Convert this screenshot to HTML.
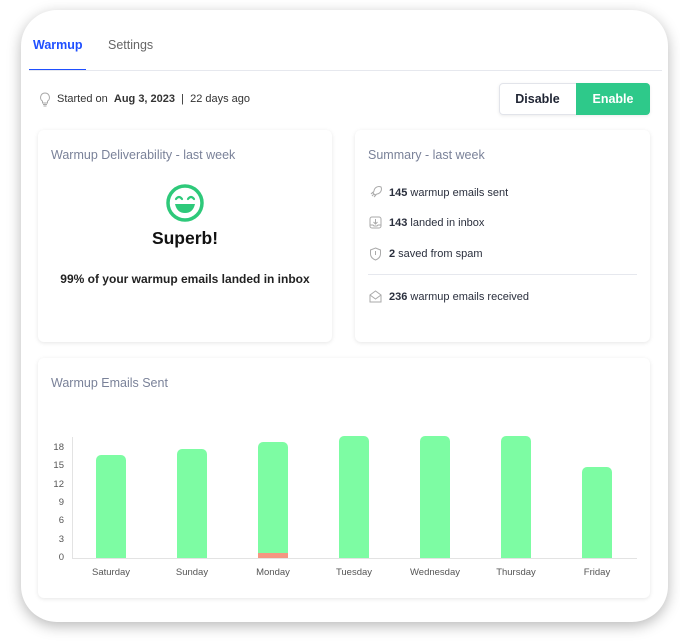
<!DOCTYPE html>
<html><head><meta charset="utf-8"><style>
*{margin:0;padding:0;box-sizing:border-box}
body{width:680px;height:643px;background:#fff;font-family:"Liberation Sans",sans-serif;position:relative;overflow:hidden;color:#1f2433}
.frame{position:absolute;left:21px;top:10px;width:647px;height:612px;border-radius:36px;background:#fff;box-shadow:0 4px 14px rgba(0,0,0,.28)}
.abs{position:absolute}
.card{position:absolute;background:#fff;border-radius:6px;box-shadow:0 1px 4px rgba(0,0,0,.10)}
.ttl{position:absolute;font-size:12.5px;color:#7a8299}
.row{position:absolute;left:14px;font-size:11px;color:#2a2f3d;display:flex;align-items:center}
.row svg{margin-right:7px}
.bar{position:absolute;width:30px;background:#7dfca3;border-radius:5px 5px 0 0}
.yl{position:absolute;left:44px;width:20px;text-align:right;font-size:9.5px;color:#555}
.xl{position:absolute;top:567px;font-size:9.5px;color:#555;width:80px;text-align:center}
</style></head><body>
<div class="frame"></div>
<div class="abs" style="left:33px;top:38px;font-size:12.5px;font-weight:bold;color:#1f4fff">Warmup</div>
<div class="abs" style="left:108px;top:38px;font-size:12.5px;color:#666">Settings</div>
<div class="abs" style="left:29px;top:69px;width:57px;height:2px;background:#1f4fff"></div>
<div class="abs" style="left:29px;top:70px;width:633px;height:1px;background:#e6e8ee"></div>
<svg class="abs" style="left:39px;top:92px" width="12" height="15" viewBox="0 0 12 15"><path d="M6 1a4.5 4.5 0 0 0-2.5 8.2V11h5V9.2A4.5 4.5 0 0 0 6 1zM4 12.5h4M4.5 14h3" fill="none" stroke="#aaa" stroke-width="1"/></svg>
<div class="abs" style="left:57px;top:93px;font-size:11px;color:#333">Started on &nbsp;<b>Aug 3, 2023</b> &nbsp;| &nbsp;22 days ago</div>
<div class="abs" style="left:499px;top:83px;width:151px;height:32px;border:1px solid #e2e4ea;border-radius:4px;box-shadow:0 1px 3px rgba(0,0,0,.08)"></div>
<div class="abs" style="left:499px;top:83px;width:77px;height:32px;line-height:32px;text-align:center;font-size:12.5px;font-weight:bold;color:#1f2433">Disable</div>
<div class="abs" style="left:576px;top:83px;width:74px;height:32px;line-height:32px;text-align:center;font-size:12.5px;font-weight:bold;color:#fff;background:#2ec98a;border-radius:0 4px 4px 0">Enable</div>

<div class="card" style="left:38px;top:130px;width:294px;height:212px">
<div class="ttl" style="left:13px;top:18px">Warmup Deliverability - last week</div>
<svg class="abs" style="left:127px;top:53px" width="40" height="40" viewBox="0 0 40 40"><circle cx="20" cy="20" r="17" fill="none" stroke="#2ec97a" stroke-width="3.5"/><path d="M11 16q3-4 6 0M23 16q3-4 6 0" fill="none" stroke="#2ec97a" stroke-width="2.2" stroke-linecap="round"/><path d="M10 21h20q-2 9-10 9t-10-9z" fill="#2ec97a"/></svg>
<div class="abs" style="left:0;width:294px;top:98px;text-align:center;font-size:17.5px;font-weight:bold;color:#111">Superb!</div>
<div class="abs" style="left:0;width:294px;top:142px;text-align:center;font-size:12px;font-weight:bold;color:#222">99% of your warmup emails landed in inbox</div>
</div>

<div class="card" style="left:355px;top:130px;width:295px;height:212px">
<div class="ttl" style="left:13px;top:18px">Summary - last week</div>
<div class="row" style="top:56px"><svg width="13" height="13" viewBox="0 0 13 13"><path d="M3 10l2-2M2 8l2-2M5 11l2-2M5 5a5 5 0 0 1 7-4 5 5 0 0 1-4 7l-2 1-2-2z" fill="none" stroke="#aaa" stroke-width="1"/></svg><b>145</b>&nbsp;warmup emails sent</div>
<div class="row" style="top:86px"><svg width="13" height="13" viewBox="0 0 13 13"><rect x="1" y="1" width="11" height="11" rx="2" fill="none" stroke="#aaa"/><path d="M6.5 3v5M4.5 6l2 2 2-2M1 9h3l1 1h3l1-1h3" fill="none" stroke="#aaa"/></svg><b>143</b>&nbsp;landed in inbox</div>
<div class="row" style="top:117px"><svg width="13" height="14" viewBox="0 0 13 14"><path d="M6.5 1l5 2v4c0 3-2.5 5-5 6-2.5-1-5-3-5-6V3z" fill="none" stroke="#aaa"/><path d="M6.5 4v4" stroke="#aaa"/></svg><b>2</b>&nbsp;saved from spam</div>
<div class="abs" style="left:13px;top:144px;width:269px;height:1px;background:#e6e8ee"></div>
<div class="row" style="top:160px"><svg width="13" height="13" viewBox="0 0 13 13"><path d="M1 5l5.5-4 5.5 4v7H1zM1 5l5.5 4 5.5-4" fill="none" stroke="#aaa"/></svg><b>236</b>&nbsp;warmup emails received</div>
</div>

<div class="card" style="left:38px;top:358px;width:612px;height:240px">
<div class="ttl" style="left:13px;top:18px">Warmup Emails Sent</div>
</div>
<div class="abs" style="left:72px;top:437px;width:1px;height:121px;background:#e3e3e3"></div>
<div class="abs" style="left:72px;top:558px;width:565px;height:1px;background:#e3e3e3"></div>
<div class="yl" style="top:442px">18</div><div class="yl" style="top:460px">15</div><div class="yl" style="top:479px">12</div><div class="yl" style="top:497px">9</div><div class="yl" style="top:515px">6</div><div class="yl" style="top:534px">3</div><div class="yl" style="top:552px">0</div>
<div class="bar" style="left:96px;top:455px;height:103px"></div>
<div class="bar" style="left:177px;top:449px;height:109px"></div>
<div class="bar" style="left:258px;top:442px;height:116px"></div>
<div class="abs" style="left:258px;top:553px;width:30px;height:5px;background:#f59682"></div>
<div class="bar" style="left:339px;top:436px;height:122px"></div>
<div class="bar" style="left:420px;top:436px;height:122px"></div>
<div class="bar" style="left:501px;top:436px;height:122px"></div>
<div class="bar" style="left:582px;top:467px;height:91px"></div>
<div class="xl" style="left:71px">Saturday</div><div class="xl" style="left:152px">Sunday</div><div class="xl" style="left:233px">Monday</div><div class="xl" style="left:314px">Tuesday</div><div class="xl" style="left:395px">Wednesday</div><div class="xl" style="left:476px">Thursday</div><div class="xl" style="left:557px">Friday</div>
</body></html>
